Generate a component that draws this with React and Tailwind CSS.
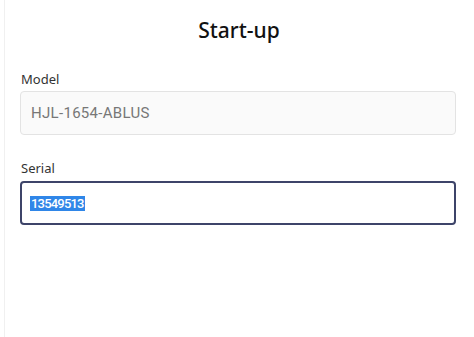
export default function App() {
  return (
    <div className="w-[474px] h-[337px] bg-white pl-[4px]">
      <div className="h-full border-l border-[#f0f0f0] pl-[15px] pr-[18px]" style={{ fontFamily: '"Noto Sans", sans-serif' }}>
        {/* titre */}
        <h1 className="pt-[14px] text-center text-[21px] font-medium text-[#111] leading-[32px] pl-[2px]">
          Start-up
        </h1>

        <div className="mt-[24px]">
          <div className="text-[13px] text-[#333] leading-[18px] pl-[1px]">Model</div>
          <div className="mt-[3px] h-[44px] rounded-[4px] border border-[#e3e3e3] bg-[#fafafa] flex items-center px-[10px]">
            <span className="text-[15px] text-[#777] tracking-[0.3px]" style={{ fontFamily: 'Roboto, sans-serif' }}>
              HJL-1654-ABLUS
            </span>
          </div>
        </div>

        <div className="mt-[24px]">
          <div className="text-[13px] text-[#333] leading-[18px] pl-[1px]">Serial</div>
          <div className="mt-[4px] h-[44px] rounded-[4px] border-2 border-[#3d4469] bg-white flex items-center px-[8px]">
            <span
              className="bg-[#2f86e8] text-white text-[13px] leading-[15px] px-[1px] font-medium tracking-[-0.8px]"
              style={{ fontFamily: 'Roboto, sans-serif' }}
            >
              13549513
            </span>
          </div>
        </div>
      </div>
    </div>
  )
}
